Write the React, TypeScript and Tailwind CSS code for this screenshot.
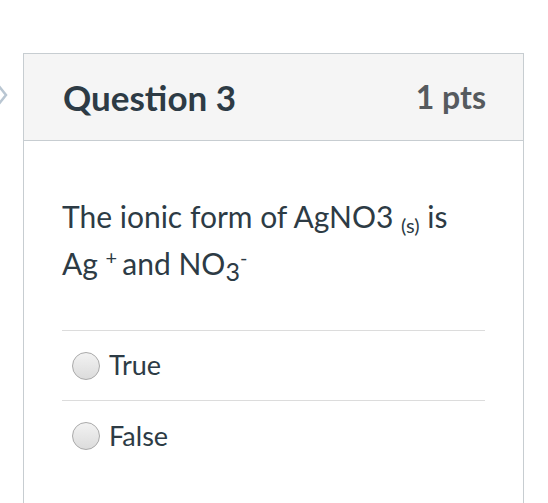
import React from "react";

function Radio() {
  return (
    <span className="inline-block h-[28px] w-[28px] shrink-0 rounded-full border border-[#a9a9a9] bg-gradient-to-b from-[#f2f2f2] to-[#dcdcdc]" />
  );
}

export default function App() {
  const font = { fontFamily: "Lato, 'Open Sans', sans-serif" };
  return (
    <div className="relative h-[503px] w-[548px] overflow-hidden bg-white" style={font}>
      <svg className="absolute left-[-12px] top-[83px]" width="20" height="24" viewBox="0 0 20 24">
        <path d="M10 2 L18 12 L10 22 L2 12 Z" fill="none" stroke="#b9c6d2" strokeWidth="2.5" />
      </svg>
      <div className="ml-[23px] mt-[53px] w-[501px] border border-b-0 border-[#c7cdd1]">
        <div className="flex h-[87px] items-center justify-between border-b border-[#c7cdd1] bg-[#f5f5f5] pl-[39px] pr-[37px]">
          <h2 className="text-[35px] font-bold text-[#2d3b45]">Question 3</h2>
          <span className="text-[32px] font-bold text-[#555a5e]">1 pts</span>
        </div>
        <div className="px-[38px] pt-[52px] pb-[40px]">
          <p className="text-[30px] leading-[47px] text-[#2d3b45]">
            The ionic form of AgNO3 <sub className="text-[20px]">(s)</sub> is
            <br />
            Ag <sup className="text-[20px]">+ </sup>and NO<sub className="text-[25px]">3</sub>
            <sup className="text-[20px]">-</sup>
          </p>
          <div className="mt-[43px] border-t border-[#dcdcdc]">
            <label className="flex h-[70px] items-center gap-[9px] border-b border-[#dcdcdc] pl-[10px]">
              <Radio />
              <span className="text-[27px] text-[#2d3b45]">True</span>
            </label>
            <label className="flex h-[70px] items-center gap-[9px] pl-[10px]">
              <Radio />
              <span className="text-[27px] text-[#2d3b45]">False</span>
            </label>
          </div>
        </div>
      </div>
    </div>
  );
}
